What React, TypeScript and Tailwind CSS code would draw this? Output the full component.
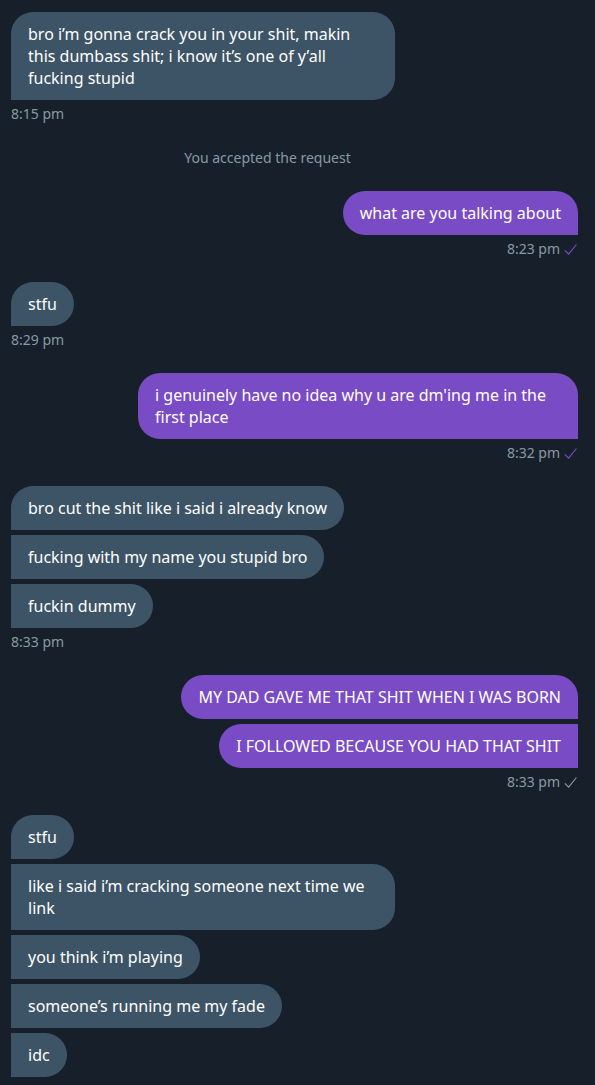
import React from 'react';

type Group = { side: 'in' | 'out'; time: string; msgs: string[]; seenPurple?: boolean };

const groups: (Group | { note: string })[] = [
    { side: 'in', time: '8:15 pm', msgs: ['bro i’m gonna crack you in your shit, makin this dumbass shit; i know it’s one of y’all fucking stupid'] },
    { note: 'You accepted the request' },
    { side: 'out', time: '8:23 pm', msgs: ['what are you talking about'], seenPurple: true },
    { side: 'in', time: '8:29 pm', msgs: ['stfu'] },
    { side: 'out', time: '8:32 pm', msgs: ["i genuinely have no idea why u are dm'ing me in the first place"], seenPurple: true },
    { side: 'in', time: '8:33 pm', msgs: ['bro cut the shit like i said i already know', 'fucking with my name you stupid bro', 'fuckin dummy'] },
    { side: 'out', time: '8:33 pm', msgs: ['MY DAD GAVE ME THAT SHIT WHEN I WAS BORN', 'I FOLLOWED BECAUSE YOU HAD THAT SHIT'], seenPurple: false },
    { side: 'in', time: '', msgs: ['stfu', 'like i said i’m cracking someone next time we link', 'you think i’m playing', 'someone’s running me my fade', 'idc'] },
];

const Check = ({ purple }: { purple?: boolean }) => (
    <svg width="15" height="15" viewBox="0 0 24 24" className={purple ? 'text-[#794bc4]' : 'text-[#8899a6]'}>
        <path d="M3 13.5l6 6L21.5 4" fill="none" stroke="currentColor" strokeWidth="1.8" />
    </svg>
);

const Bubble = ({ text, side, first }: { text: string; side: 'in' | 'out'; first: boolean }) => {
    const base = 'px-[17px] py-[11px] text-[16px] leading-[22px] text-white';
    if (side === 'in') {
        return (
            <div className={`${base} max-w-[384px] bg-[#3d5466] rounded-r-[22px] ${first ? 'rounded-tl-[22px]' : ''}`}>
                {text}
            </div>
        );
    }
    return (
        <div className={`${base} max-w-[440px] bg-[#794bc4] rounded-l-[22px] ${first ? 'rounded-tr-[22px]' : ''}`}>
            {text}
        </div>
    );
};

export default function App() {
    return (
        <div
            className="min-h-screen w-[595px] bg-[#17202a] pl-[11px] pr-[17px] pt-[12px] pb-[7px]"
            style={{ fontFamily: '"Noto Sans", "Open Sans", sans-serif' }}
        >
            <div className="flex flex-col gap-[23px]">
                {groups.map((g, i) => {
                    if ('note' in g) {
                        return (
                            <div key={i} className="pt-[1px] pr-[54px] text-center text-[14px] leading-[20px] text-[#8899a6]">
                                {g.note}
                            </div>
                        );
                    }
                    const out = g.side === 'out';
                    return (
                        <div key={i} className={`flex flex-col ${out ? 'items-end' : 'items-start'}`}>
                            <div className={`flex flex-col gap-[5px] ${out ? 'items-end' : 'items-start'}`}>
                                {g.msgs.map((m, j) => (
                                    <Bubble key={j} text={m} side={g.side} first={j === 0} />
                                ))}
                            </div>
                            {g.time && (
                                <div className="mt-[4px] flex items-center gap-[3px] text-[14px] leading-[20px] text-[#8899a6]">
                                    <span>{g.time}</span>
                                    {out && <Check purple={g.seenPurple} />}
                                </div>
                            )}
                        </div>
                    );
                })}
            </div>
        </div>
    );
}
